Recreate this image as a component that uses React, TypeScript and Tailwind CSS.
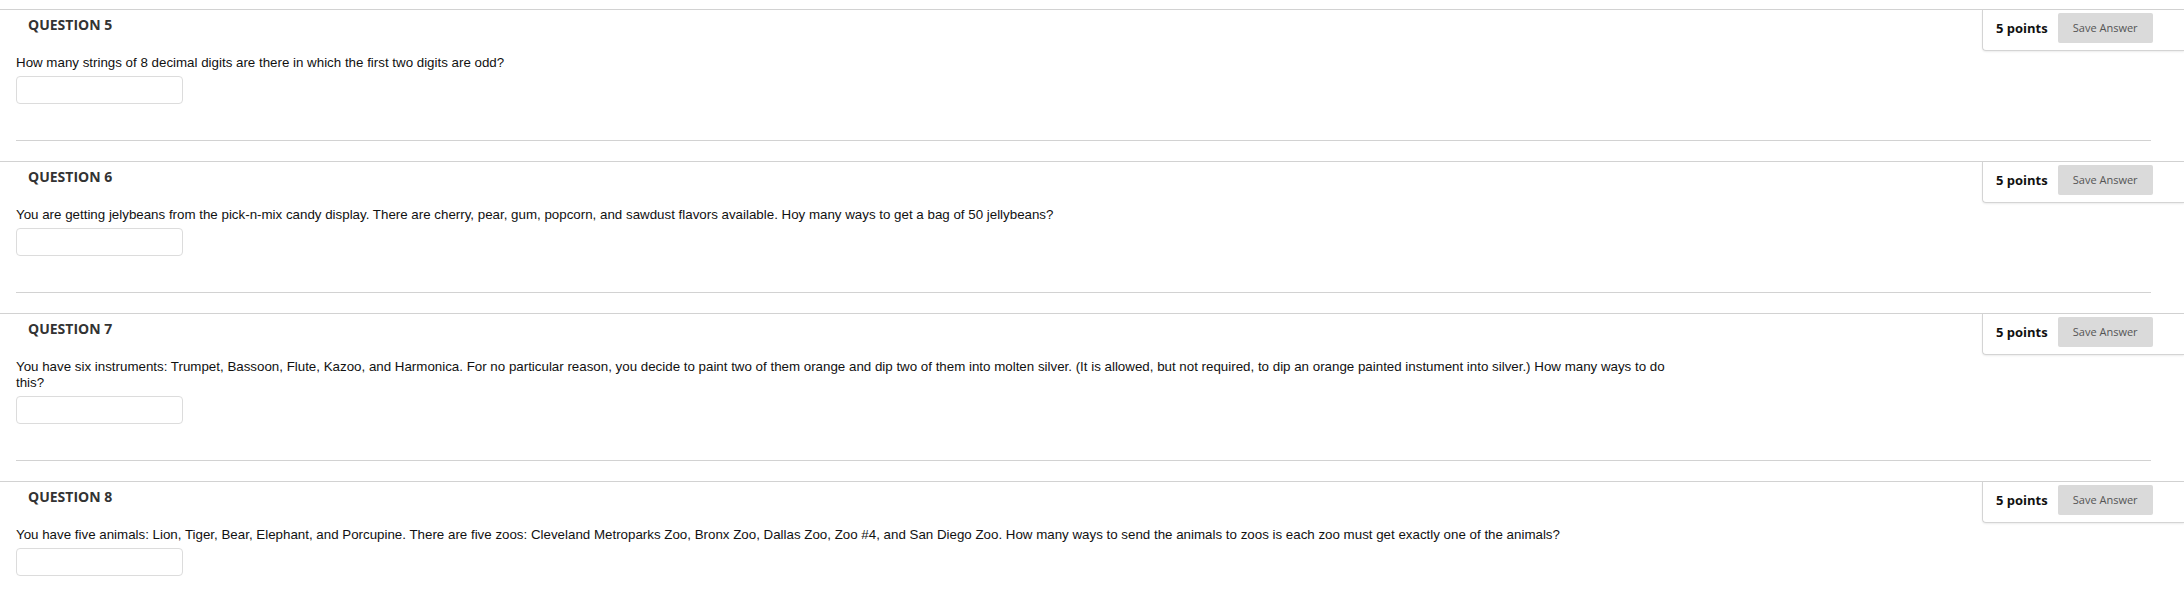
const questions = [
  {
    n: 5,
    text: 'How many strings of 8 decimal digits are there in which the first two digits are odd?',
  },
  {
    n: 6,
    text: 'You are getting jelybeans from the pick-n-mix candy display. There are cherry, pear, gum, popcorn, and sawdust flavors available. Hoy many ways to get a bag of 50 jellybeans?',
  },
  {
    n: 7,
    text: 'You have six instruments: Trumpet, Bassoon, Flute, Kazoo, and Harmonica. For no particular reason, you decide to paint two of them orange and dip two of them into molten silver. (It is allowed, but not required, to dip an orange painted instument into silver.) How many ways to do this?',
  },
  {
    n: 8,
    text: 'You have five animals: Lion, Tiger, Bear, Elephant, and Porcupine. There are five zoos: Cleveland Metroparks Zoo, Bronx Zoo, Dallas Zoo, Zoo #4, and San Diego Zoo. How many ways to send the animals to zoos is each zoo must get exactly one of the animals?',
  },
]

function Question({ n, text }: { n: number; text: string }) {
  return (
    <li className="border-t border-[#d2d2d2]">
      <div className="flex items-start justify-between">
        <h3 className="pl-7 pt-[5px] text-[14px] leading-[20px] font-bold text-[#333] font-['Open_Sans',sans-serif]">
          QUESTION {n}
        </h3>
        <div className="flex h-[41px] w-[202px] items-start gap-[10px] rounded-bl-[4px] border-b border-l border-[#d4d4d4] pt-[3px] pl-[13px] shadow-[0_1px_2px_rgba(0,0,0,0.08)] font-['Open_Sans',sans-serif]">
          <span className="mt-[5px] text-[13px] leading-[20px] font-bold text-[#111]">5 points</span>
          <button className="h-[30px] w-[95px] rounded-[2px] bg-[#dadada] text-[11px] text-[#555]">Save Answer</button>
        </div>
      </div>
      <div className="pl-4 pr-[33px] pt-[4px]">
        <p className="w-[1660px] text-[13.33px] leading-[16px] text-[#111] font-['Liberation_Sans',Arial,sans-serif]">{text}</p>
        <input type="text" className="mt-[5px] block h-[28px] w-[167px] rounded-[4px] border border-[#dcdcdc] bg-white" />
        <div className="mt-[36px] mb-[20px] border-t border-[#d2d2d2]" />
      </div>
    </li>
  )
}

export default function App() {
  return (
    <div className="min-h-screen bg-white pt-[9px]">
      <ul>
        {questions.map((q) => (
          <Question key={q.n} n={q.n} text={q.text} />
        ))}
      </ul>
    </div>
  )
}
